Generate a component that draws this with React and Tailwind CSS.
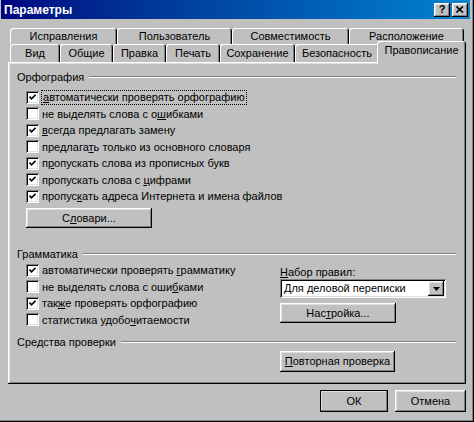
import React from 'react';

const RAISED = 'shadow-[inset_-1px_-1px_#000,inset_1px_1px_#fff,inset_-2px_-2px_#808080,inset_2px_2px_#dfdfdf]';
const SUNKEN = 'shadow-[inset_1px_1px_#808080,inset_-1px_-1px_#fff,inset_2px_2px_#000,inset_-2px_-2px_#dfdfdf]';

function Check({ checked }) {
  return (
    <div className={`w-[13px] h-[13px] bg-white flex items-center justify-center shrink-0 ${SUNKEN}`}>
      {checked && (
        <svg width="7" height="7" viewBox="0 0 7 7">
          <path d="M0.5 2.5 L2.5 4.8 L6.5 0.8" stroke="#000" strokeWidth="1.6" fill="none" />
        </svg>
      )}
    </div>
  );
}

function Row({ checked, children }) {
  return (
    <div className="h-[16.5px] flex items-center gap-[3px]">
      <Check checked={checked} />
      <span className="whitespace-nowrap">{children}</span>
    </div>
  );
}

function Group({ title, className }) {
  return (
    <div className={`h-[14px] flex items-center gap-[5px] ${className}`}>
      <span className="whitespace-nowrap">{title}</span>
      <div className="flex-1 h-[2px] border-t border-b border-t-[#808080] border-b-white" />
    </div>
  );
}

function Button({ className, children }) {
  return (
    <div className={`flex items-center justify-center bg-[#c0c0c0] ${RAISED} ${className}`}>
      {children}
    </div>
  );
}

const TAB = 'flex items-center justify-center rounded-t-[3px] bg-[#c0c0c0] shadow-[inset_1px_1px_#fff,inset_-1px_0_#000,inset_-2px_0_#808080] whitespace-nowrap';

export default function App() {
  return (
    <div className="relative w-[474px] h-[422px] bg-[#c0c0c0] overflow-hidden font-['Liberation_Sans',Arial,sans-serif] text-[11px] text-black shadow-[inset_-1px_-1px_#000,inset_-2px_-2px_#808080]">
      {/* title bar */}
      <div className="ml-[1px] mr-[4px] h-[19px] bg-linear-to-r from-[#000080] to-[#1084d0] flex items-center pl-[3px] pr-[2px]">
        <span className="text-white font-bold text-[12px] flex-1">Параметры</span>
        <Button className="w-[16px] h-[14px] font-bold text-[11px] leading-none pb-[1px]">?</Button>
        <Button className="w-[16px] h-[14px] ml-[2px]">
          <svg width="8" height="7" viewBox="0 0 8 7">
            <path d="M0.5 0.5 L7 6.5 M7 0.5 L0.5 6.5" stroke="#000" strokeWidth="1.6" />
          </svg>
        </Button>
      </div>

      {/* tabs */}
      <div className="mt-[9px] ml-[10px] flex h-[16px]">
        <div className={`w-[107px] ${TAB}`}>Исправления</div>
        <div className={`w-[115px] ${TAB}`}>Пользователь</div>
        <div className={`w-[117px] ${TAB}`}>Совместимость</div>
        <div className={`w-[115px] ${TAB}`}>Расположение</div>
      </div>
      <div className="ml-[10px] flex items-start h-[18px]">
        <div className={`w-[50px] h-[18px] ${TAB}`}>Вид</div>
        <div className={`w-[53px] h-[18px] ${TAB}`}>Общие</div>
        <div className={`w-[53px] h-[18px] ${TAB}`}>Правка</div>
        <div className={`w-[54px] h-[18px] ${TAB}`}>Печать</div>
        <div className={`w-[75px] h-[18px] ${TAB}`}>Сохранение</div>
        <div className={`w-[84px] h-[18px] ${TAB}`}>Безопасность</div>
        <div className={`relative z-10 w-[89px] -mx-[2px] -mt-[3px] h-[23px] pb-[4px] ${TAB}`}>Правописание</div>
      </div>

      {/* panel */}
      <div className={`ml-[8px] w-[458px] h-[322px] pt-[8px] pl-[9px] pr-[10px] ${RAISED}`}>
        <Group title="Орфография" />
        <div className="ml-[9px] mt-[5px]">
          <div className="h-[16.5px] flex items-center gap-[2px]">
            <Check checked />
            <span className="whitespace-nowrap border border-dotted border-black px-[1px] leading-[13px]">
              <u>а</u>втоматически проверять орфографию
            </span>
          </div>
          <Row>не выделять слова с о<u>ш</u>ибками</Row>
          <Row checked><u>в</u>сегда предлагать замену</Row>
          <Row>предлага<u>т</u>ь только из основного словаря</Row>
          <Row checked>п<u>р</u>опускать слова из прописных букв</Row>
          <Row checked>пропускать слова с <u>ц</u>ифрами</Row>
          <Row checked>пропус<u>к</u>ать адреса Интернета и имена файлов</Row>
          <Button className="mt-[3.5px] w-[126px] h-[20px]">С<u>л</u>овари...</Button>
        </div>

        <Group title="Грамматика" className="mt-[19px]" />
        <div className="flex">
          <div className="ml-[9px] w-[254px] mt-[1px]">
            <Row checked>автоматически проверять <u>г</u>рамматику</Row>
            <Row>не выделять слова с оши<u>б</u>ками</Row>
            <Row checked>так<u>ж</u>е проверять орфографию</Row>
            <Row>статистика удобо<u>ч</u>итаемости</Row>
          </div>
          <div className="pt-[4px]">
            <div className="h-[14px] flex items-center"><span><u>Н</u>абор правил:</span></div>
            <div className={`w-[166px] h-[19px] bg-white flex items-center pl-[4px] pr-[2px] ${SUNKEN}`}>
              <span className="flex-1 whitespace-nowrap">Для деловой переписки</span>
              <Button className="w-[16px] h-[15px]">
                <svg width="7" height="4" viewBox="0 0 7 4">
                  <path d="M0 0 H7 L3.5 4 Z" fill="#000" />
                </svg>
              </Button>
            </div>
            <Button className="mt-[5px] w-[116px] h-[20px]">Нас<u>т</u>ройка...</Button>
          </div>
        </div>

        <Group title="Средства проверки" className="mt-[7px]" />
        <Button className="ml-[263px] mt-[2px] w-[115px] h-[21px]"><span><u>П</u>овторная проверка</span></Button>
      </div>

      {/* bottom buttons */}
      <div className="mt-[6px] mr-[8px] flex justify-end gap-[7px]">
        <Button className="w-[68px] h-[22px] outline outline-1 outline-black -outline-offset-1">ОК</Button>
        <Button className="w-[71px] h-[22px]">Отмена</Button>
      </div>
    </div>
  );
}
